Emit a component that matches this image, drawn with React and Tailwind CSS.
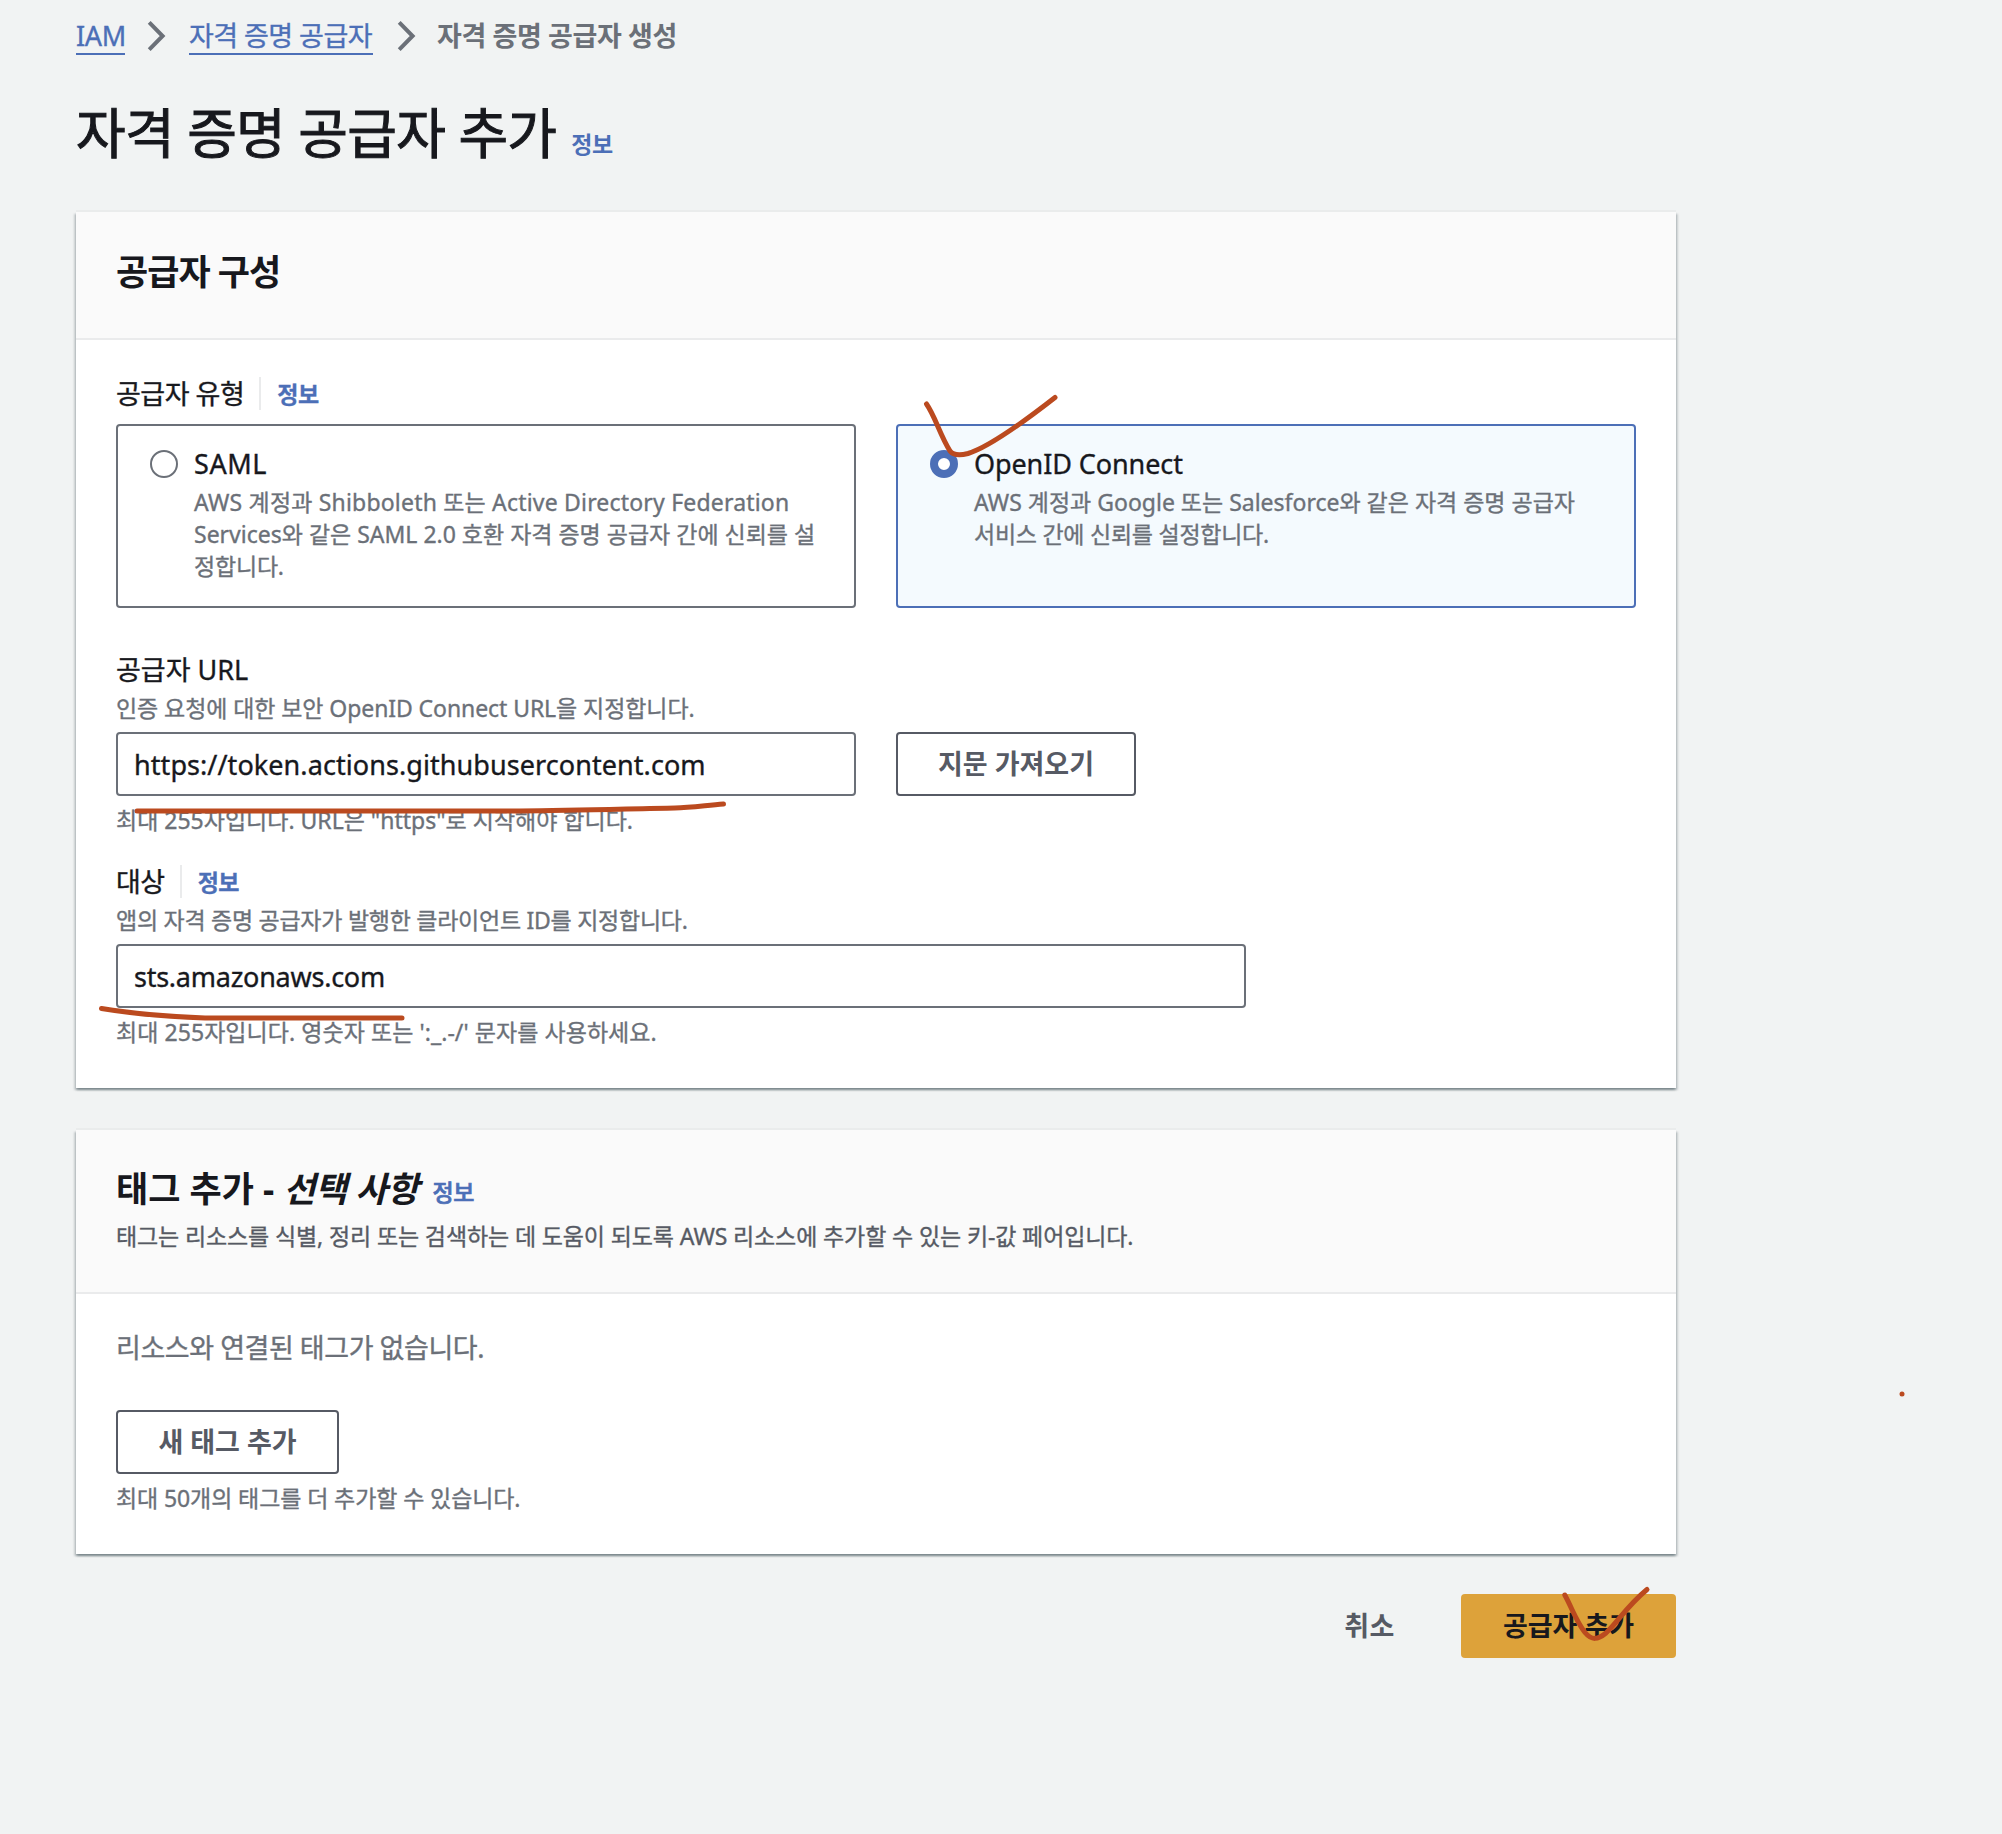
const body = "text-[27px] leading-[36px] whitespace-nowrap";
const small = "text-[23px] leading-[32px] whitespace-nowrap";
const hint = small + " text-[#6b7078]";

function Chevron() {
  return (
    <svg width="19" height="30" viewBox="0 0 19 30" fill="none" className="mt-[2px] shrink-0">
      <path d="M2.2 1.4 15.6 15 2.2 28.6" stroke="#6b7078" strokeWidth="4" />
    </svg>
  );
}

function Info({ weight = "font-bold", className = "" }) {
  return (
    <a className={"text-[23px] leading-[32px] tracking-[-0.5px] text-[#4c6fb7] whitespace-nowrap " + weight + " " + className}>정보</a>
  );
}

function Card({ header, className = "", children }) {
  return (
    <section
      className={
        "w-[1600px] bg-white shadow-[0_-2px_0_0_#eaecec,0_2px_2px_0_rgba(0,28,36,0.3),2px_2px_2px_0_rgba(0,28,36,0.15),-2px_2px_2px_0_rgba(0,28,36,0.15)] " +
        className
      }
    >
      <header className="border-b-2 border-[#eaebec] bg-[#fafafa] px-10 pt-[38px]">{header}</header>
      <div className="px-10 pb-10">{children}</div>
    </section>
  );
}

function LabelRow({ label, className = "" }) {
  return (
    <div className={"flex h-9 " + className}>
      <span className={"tracking-[-0.5px] " + body}>{label}</span>
      <span className="ml-[15px] mt-px h-[33px] w-[2px] bg-[#eaebec]" />
      <Info className="ml-4 mt-[2px]" />
    </div>
  );
}

function Tile({ selected, title, titleClass, children }) {
  return (
    <div
      className={
        "flex h-[184px] w-[740px] rounded-[4px] border-2 pl-8 pt-5 " +
        (selected ? "border-[#4c6fb7] bg-[#f4fafe]" : "border-[#6b7078] bg-white")
      }
    >
      <span
        className={
          "mt-1 size-7 shrink-0 rounded-full bg-white " +
          (selected ? "border-[8px] border-[#4c6fb7]" : "border-2 border-[#6b7078]")
        }
      />
      <div className="ml-4">
        <div className={body + " " + titleClass}>{title}</div>
        <div className={"mt-1 " + hint}>{children}</div>
      </div>
    </div>
  );
}

function Button({ className, children }) {
  return (
    <button className={"flex h-16 items-center justify-center rounded-[4px] font-bold [-webkit-text-stroke:0] " + body + " " + className}>
      {children}
    </button>
  );
}

function Input({ className, children }) {
  return (
    <div className={"flex h-16 items-center rounded-[4px] border-2 border-[#6b7078] bg-white pl-4 pt-px " + body + " " + className}>
      {children}
    </div>
  );
}

function PenMarks() {
  return (
    <svg
      width="2002"
      height="1834"
      viewBox="0 0 2002 1834"
      fill="none"
      stroke="#bb4a1f"
      strokeLinecap="round"
      strokeLinejoin="round"
      className="pointer-events-none absolute left-0 top-0"
    >
      <path strokeWidth="5" d="M926.500 404C935 416 940 435 950 451C953 455 960 455.500 968 453.500C990 447 1030 417 1055 397.500" />
      <path strokeWidth="5" d="M137 811H520C580 810.500 640 808.500 675 808C690 807.500 705 805.500 723.500 804" />
      <path strokeWidth="5" d="M101.500 1008.500C135 1014 165 1016.500 205 1018H402" />
      <path strokeWidth="5" d="M1564.800 1595C1572 1608 1576 1621 1585 1632.500C1592 1641 1598 1639.500 1606 1633C1618 1622 1626 1607 1647 1589.500" />
      <circle cx="1902" cy="1394" r="2.500" fill="#bb4a1f" stroke="none" />
    </svg>
  );
}

export default function App() {
  return (
    <div className="relative h-[1834px] overflow-hidden bg-[#f1f3f3] pl-[76px] font-['Noto_Sans','Noto_Sans_CJK_KR',sans-serif] text-[#17181d] [-webkit-text-stroke:0.35px]">
      <nav className="flex pt-[19px] text-[27px] leading-[34px] whitespace-nowrap">
        <a className="h-9 w-[49px] border-b-2 border-[#4c6fb7] tracking-[-0.3px] text-[#4c6fb7]">IAM</a>
        <span className="ml-[22px]"><Chevron /></span>
        <a className="ml-[23px] h-9 w-[184px] border-b-2 border-[#4c6fb7] tracking-[-0.55px] text-[#4c6fb7]">자격 증명 공급자</a>
        <span className="ml-6"><Chevron /></span>
        <span className="ml-[21px] font-bold tracking-[-0.39px] text-[#6b7078] [-webkit-text-stroke:0]">자격 증명 공급자 생성</span>
      </nav>

      <div className="mt-[45px] flex h-[66px] items-baseline whitespace-nowrap">
        <h1 className="text-[54px] leading-[66px] tracking-[-0.75px] [-webkit-text-stroke:1px]">자격 증명 공급자 추가</h1>
        <Info className="relative -top-px ml-[15px] [-webkit-text-stroke:0]" />
      </div>

      <Card
        className="mt-[46px]"
        header={
          <h2 className="pb-[44px] text-[35px] font-bold leading-[44px] tracking-[-1px] whitespace-nowrap [-webkit-text-stroke:0]">공급자 구성</h2>
        }
      >
        <LabelRow label="공급자 유형" className="mt-9" />
        <div className="mt-3 flex justify-between">
          <Tile title="SAML" titleClass="tracking-[0.6px]">
            <div className="tracking-[0.19px]">AWS 계정과 Shibboleth 또는 Active Directory Federation</div>
            <div>Services와 같은 SAML 2.0 호환 자격 증명 공급자 간에 신뢰를 설</div>
            <div className="tracking-[-0.2px]">정합니다.</div>
          </Tile>
          <Tile selected title="OpenID Connect" titleClass="tracking-[-0.1px]">
            <div>AWS 계정과 Google 또는 Salesforce와 같은 자격 증명 공급자</div>
            <div className="tracking-[-0.25px]">서비스 간에 신뢰를 설정합니다.</div>
          </Tile>
        </div>

        <div className={"mt-11 " + body}>공급자 URL</div>
        <div className={"mt-1 tracking-[-0.08px] " + hint}>인증 요청에 대한 보안 OpenID Connect URL을 지정합니다.</div>
        <div className="mt-2 flex gap-10">
          <Input className="w-[740px] tracking-[0.07px]">https://token.actions.githubusercontent.com</Input>
          <Button className="w-[240px] border-2 border-[#565a64] bg-white text-[#565a64]">지문 가져오기</Button>
        </div>
        <div className={"mt-2 " + hint}>최대 255자입니다. URL은 "https"로 시작해야 합니다.</div>

        <LabelRow label="대상" className="mt-7" />
        <div className={"mt-1 tracking-[-0.26px] " + hint}>앱의 자격 증명 공급자가 발행한 클라이언트 ID를 지정합니다.</div>
        <Input className="mt-2 w-[1130px] tracking-[-0.25px]">sts.amazonaws.com</Input>
        <div className={"mt-2 tracking-[0.06px] " + hint}>최대 255자입니다. 영숫자 또는 ':_.-/' 문자를 사용하세요.</div>
      </Card>

      <Card
        className="mt-[42px]"
        header={
          <>
            <div className="flex h-[44px] items-baseline whitespace-nowrap">
              <h2 className="relative -top-px text-[35px] font-bold leading-[44px] whitespace-pre [-webkit-text-stroke:0]">
                태그 추가 - <em className="tracking-[-0.55px]">선택 사항</em>
              </h2>
              <Info weight="font-medium" className="relative -top-[2px] ml-[14px] [-webkit-text-stroke:0.7px]" />
            </div>
            <p className={"mt-2 pb-10 tracking-[-0.12px] text-[#565a64] " + small}>
              태그는 리소스를 식별, 정리 또는 검색하는 데 도움이 되도록 AWS 리소스에 추가할 수 있는 키-값 페어입니다.
            </p>
          </>
        }
      >
        <div className={"pt-9 tracking-[-0.45px] text-[#6b7078] " + body}>리소스와 연결된 태그가 없습니다.</div>
        <Button className="mt-11 w-[223px] border-2 border-[#565a64] bg-white text-[#565a64]">새 태그 추가</Button>
        <div className={"mt-2 tracking-[-0.1px] " + hint}>최대 50개의 태그를 더 추가할 수 있습니다.</div>
      </Card>

      <div className="mt-10 flex w-[1600px] justify-end gap-[26px]">
        <Button className="w-[131px] tracking-[0.5px] text-[#565a64]">취소</Button>
        <Button className="w-[215px] bg-[#dda23a]">공급자 추가</Button>
      </div>

      <PenMarks />
    </div>
  );
}
